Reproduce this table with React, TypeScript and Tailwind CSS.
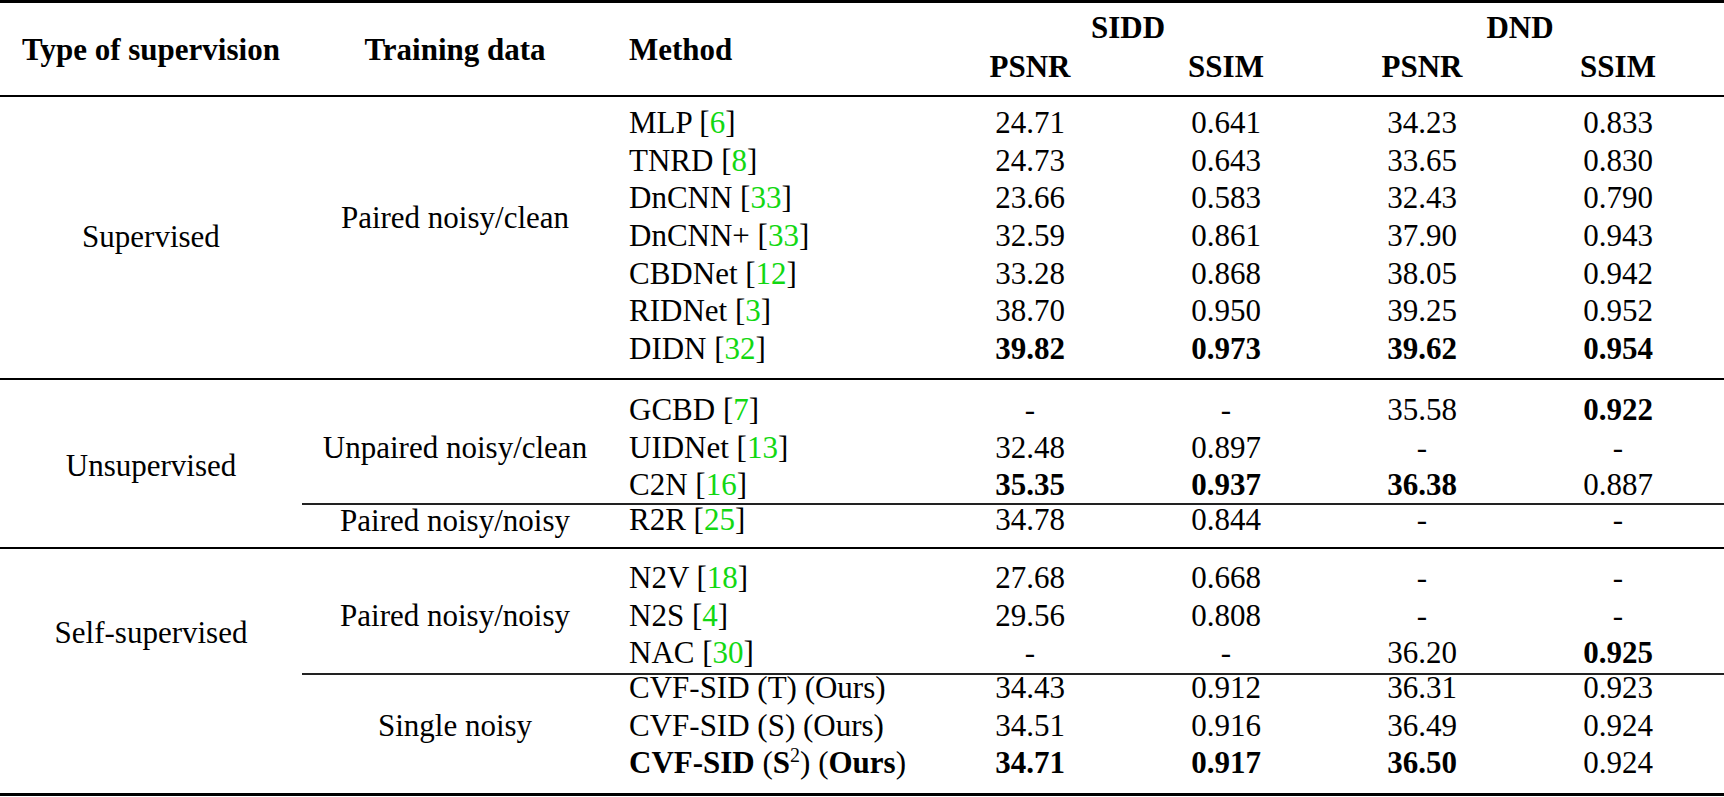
import type { ReactNode } from 'react'

type Row = {
  method: ReactNode
  values: string[] // a leading '*' marks a bold value
}

const Cite = ({ n }: { n: number }) => (
  <>
    {' '}[<span className="text-[#12d812]">{n}</span>]
  </>
)

const m = (name: string, n: number) => (
  <>
    {name}
    <Cite n={n} />
  </>
)

const supervised: Row[] = [
  { method: m('MLP', 6), values: ['24.71', '0.641', '34.23', '0.833'] },
  { method: m('TNRD', 8), values: ['24.73', '0.643', '33.65', '0.830'] },
  { method: m('DnCNN', 33), values: ['23.66', '0.583', '32.43', '0.790'] },
  { method: m('DnCNN+', 33), values: ['32.59', '0.861', '37.90', '0.943'] },
  { method: m('CBDNet', 12), values: ['33.28', '0.868', '38.05', '0.942'] },
  { method: m('RIDNet', 3), values: ['38.70', '0.950', '39.25', '0.952'] },
  { method: m('DIDN', 32), values: ['*39.82', '*0.973', '*39.62', '*0.954'] },
]

const unpairedClean: Row[] = [
  { method: m('GCBD', 7), values: ['-', '-', '35.58', '*0.922'] },
  { method: m('UIDNet', 13), values: ['32.48', '0.897', '-', '-'] },
  { method: m('C2N', 16), values: ['*35.35', '*0.937', '*36.38', '0.887'] },
]

const pairedNoisyUnsup: Row[] = [
  { method: m('R2R', 25), values: ['34.78', '0.844', '-', '-'] },
]

const pairedNoisySelf: Row[] = [
  { method: m('N2V', 18), values: ['27.68', '0.668', '-', '-'] },
  { method: m('N2S', 4), values: ['29.56', '0.808', '-', '-'] },
  { method: m('NAC', 30), values: ['-', '-', '36.20', '*0.925'] },
]

const singleNoisy: Row[] = [
  { method: 'CVF-SID (T) (Ours)', values: ['34.43', '0.912', '36.31', '0.923'] },
  { method: 'CVF-SID (S) (Ours)', values: ['34.51', '0.916', '36.49', '0.924'] },
  {
    method: (
      <>
        <b>CVF-SID</b> (<b>S</b>
        <sup className="text-[20px] -top-[11px]">2</sup>) (<b>Ours</b>)
      </>
    ),
    values: ['*34.71', '*0.917', '*36.50', '0.924'],
  },
]

function Rows({ rows }: { rows: Row[] }) {
  return (
    <div className="flex flex-col">
      {rows.map((row, i) => (
        <div key={i} className="flex h-[37.7px] shrink-0 leading-[37.7px]">
          <div className="w-[324px] pl-[21px] whitespace-nowrap">{row.method}</div>
          {row.values.map((v, j) => (
            <div key={j} className={`w-[196px] text-center ${v.startsWith('*') ? 'font-bold' : ''}`}>
              {v.replace('*', '')}
            </div>
          ))}
        </div>
      ))}
    </div>
  )
}

function Label({ children }: { children: ReactNode }) {
  return (
    <div className="flex w-[306px] items-center justify-center whitespace-nowrap leading-[37px]">
      {children}
    </div>
  )
}

export default function App() {
  return (
    <div className="flex w-[1724px] h-[797px] flex-col bg-white text-black text-[31px] leading-[37px] font-['Liberation_Serif','Times_New_Roman',serif]">
      <div className="h-[3px] shrink-0 bg-black" />

      {/* header */}
      <div className="flex h-[92px] shrink-0 font-bold leading-[39px]">
        <div className="flex w-[302px] items-center justify-center">Type of supervision</div>
        <div className="flex w-[306px] items-center justify-center">Training data</div>
        <div className="flex w-[324px] items-center pl-[21px]">Method</div>
        <div className="flex w-[784px] flex-col pt-[5px]">
          <div className="flex">
            <div className="w-[392px] text-center">SIDD</div>
            <div className="w-[392px] text-center">DND</div>
          </div>
          <div className="flex">
            <div className="w-[196px] text-center">PSNR</div>
            <div className="w-[196px] text-center">SSIM</div>
            <div className="w-[196px] text-center">PSNR</div>
            <div className="w-[196px] text-center">SSIM</div>
          </div>
        </div>
      </div>
      <div className="h-[2px] shrink-0 bg-black" />

      {/* supervised */}
      <div className="flex h-[281px] shrink-0 pt-[7px]">
        <div className="flex w-[302px] h-[264px] items-center justify-center">Supervised</div>
        <div className="flex w-[306px] h-[226px] items-center justify-center">Paired noisy/clean</div>
        <Rows rows={supervised} />
      </div>
      <div className="h-[2px] shrink-0 bg-black" />

      {/* unsupervised */}
      <div className="flex h-[167px] shrink-0 pt-[11px]">
        <div className="flex w-[302px] h-[148px] items-center justify-center">Unsupervised</div>
        <div className="flex flex-1 flex-col">
          <div className="flex h-[113px] shrink-0">
            <Label>Unpaired noisy/clean</Label>
            <Rows rows={unpairedClean} />
          </div>
          <div className="relative z-10 -mt-[1px] h-[2px] shrink-0 bg-[#222]" />
          <div className="flex h-[38px] shrink-0 -mt-[4px]">
            <Label>Paired noisy/noisy</Label>
            <Rows rows={pairedNoisyUnsup} />
          </div>
        </div>
      </div>
      <div className="h-[2px] shrink-0 bg-black" />

      {/* self-supervised */}
      <div className="flex h-[244px] shrink-0 pt-[10px]">
        <div className="flex w-[302px] h-[146px] items-center justify-center">Self-supervised</div>
        <div className="flex flex-1 flex-col">
          <div className="flex h-[113px] shrink-0">
            <Label>Paired noisy/noisy</Label>
            <Rows rows={pairedNoisySelf} />
          </div>
          <div className="relative z-10 mt-[1px] h-[2px] shrink-0 bg-[#222]" />
          <div className="flex h-[113px] shrink-0 -mt-[6px]">
            <Label>Single noisy</Label>
            <Rows rows={singleNoisy} />
          </div>
        </div>
      </div>
      <div className="h-[3px] shrink-0 bg-black" />
    </div>
  )
}
